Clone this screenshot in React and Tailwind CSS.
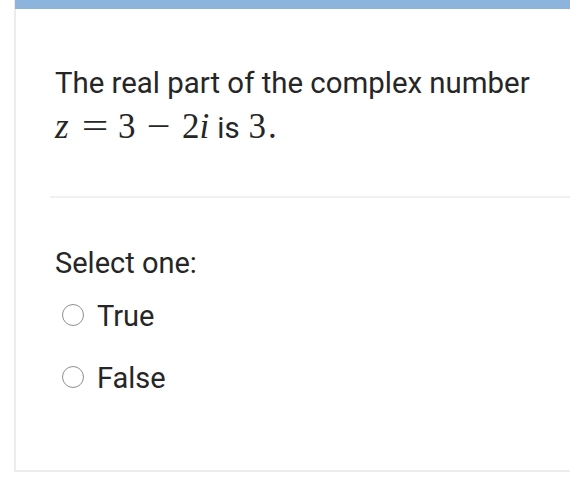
export default function App() {
  const sans = { fontFamily: "Roboto, 'Noto Sans', sans-serif" };
  const serif = { fontFamily: "'Liberation Serif', 'DejaVu Serif', serif" };
  return (
    <div className="w-[570px] h-[482px] bg-white overflow-hidden" style={sans}>
      <div className="ml-[14px] h-[472px] border-l-2 border-b-2 border-[#ececec] flex flex-col">
        <div className="h-[9px] bg-[#8cb4dc] -ml-[1px]"></div>
        <div className="pl-[39px] pt-[52px] text-[29.4px] leading-[44px] text-[#262626]">
          <div>The real part of the complex number</div>
          <div className="flex items-baseline h-[44px]">
            <span className="inline-block w-[20px] italic text-[35px] leading-[44px]" style={serif}>z</span>
            <span className="inline-block w-[26px] ml-[7px] text-center text-[35px] leading-[44px] scale-x-[1.35]" style={serif}>=</span>
            <span className="inline-block w-[17px] ml-[10px] text-center text-[35px] leading-[44px]" style={serif}>3</span>
            <span className="inline-block w-[23px] ml-[12px] text-center text-[35px] leading-[44px] scale-x-[1.2]" style={serif}>−</span>
            <span className="inline-block ml-[12px] text-[35px] leading-[44px]" style={serif}>2<span className="italic">i</span></span>
            <span className="ml-[8px]">is</span>
            <span className="inline-block ml-[9px] text-[35px] leading-[44px]" style={serif}>3</span>
            <span className="ml-[2px] text-[35px] leading-[44px]" style={serif}>.</span>
          </div>
        </div>
        <div className="ml-[34px] mt-[47px] h-[2px] bg-[#f0f0f0]"></div>
        <div className="pl-[39px] pt-[49px] text-[29px] leading-[32px] text-[#262626]">Select one:</div>
        <div className="pl-[46px] mt-[21px] flex flex-col gap-[30px] text-[29px] leading-[32px] text-[#262626]">
          <label className="flex items-center">
            <span className="w-[22px] h-[22px] mb-[3px] rounded-full border-[1.5px] border-[#8f8f8f] bg-white"></span>
            <span className="ml-[13px]">True</span>
          </label>
          <label className="flex items-center">
            <span className="w-[22px] h-[22px] mb-[3px] rounded-full border-[1.5px] border-[#8f8f8f] bg-white"></span>
            <span className="ml-[13px]">False</span>
          </label>
        </div>
      </div>
    </div>
  );
}
